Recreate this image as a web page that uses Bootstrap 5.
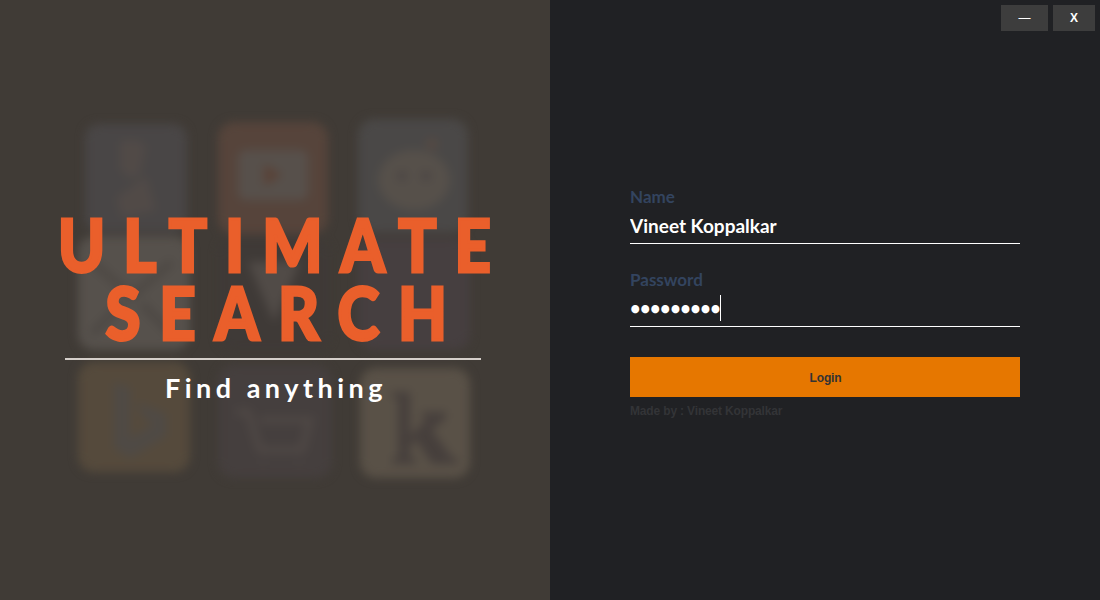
<!DOCTYPE html>
<html>
<head>
    <meta charset="UTF-8">
    <title>Ultimate Search</title>
    <link rel="stylesheet" href="https://cdn.jsdelivr.net/npm/bootstrap@5.3.0/dist/css/bootstrap.min.css">
    <style>
        body {
            width: 1100px;
            height: 600px;
            overflow: hidden;
            background: #202124;
        }

        .side-art {
            width: 550px;
            height: 600px;
            background: #403b36;
        }

        .art-icons {
            position: absolute;
            left: 0;
            top: 0;
            filter: blur(5px);
        }

        .brand {
            position: relative;
            padding-top: 210px;
        }

        .brand-line {
            font-family: Lato, "Liberation Sans", sans-serif;
            font-weight: 900;
            font-size: 72px;
            line-height: 68px;
            color: #ea5f2b;
            -webkit-text-stroke: 3px #ea5f2b;
            white-space: nowrap;
            transform: scaleX(0.88);
        }

        .brand-one { letter-spacing: 20.4px; margin-right: -17px; }
        .brand-two { letter-spacing: 21.5px; margin-right: -21.5px; }

        .brand-rule {
            width: 416px;
            height: 2px;
            margin: 12px 0 0 65px;
            background: #d5cfca;
        }

        .brand-tag {
            font-family: Lato, "Liberation Sans", sans-serif;
            font-weight: 700;
            font-size: 27px;
            line-height: 32px;
            letter-spacing: 4.5px;
            margin-top: 12px;
            padding-left: 2px;
            color: #fff;
        }

        .side-form {
            width: 550px;
            height: 600px;
        }

        .win-btn {
            height: 26px;
            border: 0;
            border-radius: 0;
            padding: 0;
            background: #3d3d3d;
            color: #fff;
            font-family: "Liberation Sans", sans-serif;
            font-weight: 700;
            font-size: 12px;
        }

        .win-bar {
            padding: 5px 5px 0 0;
            gap: 5px;
        }

        .win-min { width: 47px; font-weight: 400; }
        .win-close { width: 42px; }

        .login-form {
            width: 390px;
            margin: 156px 0 0 80px;
        }

        .field-label {
            display: block;
            margin: 0;
            font-family: Lato, "Liberation Sans", sans-serif;
            font-weight: 700;
            font-size: 17px;
            line-height: 20px;
            color: #33445f;
        }

        .field-input,
        .field-input:focus {
            height: 37px;
            padding: 0;
            border: 0;
            border-bottom: 1px solid #fff;
            border-radius: 0;
            box-shadow: none;
            background: transparent;
            color: #fff;
            font-family: Lato, "Liberation Sans", sans-serif;
            font-weight: 700;
            font-size: 19px;
        }

        .field-gap { margin-top: 26px; }

        .pass-input,
        .pass-input:focus {
            font-size: 18px;
            letter-spacing: -0.4px;
        }

        .pass-caret {
            position: absolute;
            left: 90px;
            top: 5px;
            width: 1px;
            height: 26px;
            background: #fff;
        }

        .login-btn,
        .login-btn:hover {
            height: 40px;
            margin-top: 30px;
            padding: 6px 0 4px 1px;
            border: 0;
            border-radius: 0;
            background: #e67700;
            color: #333;
            font-family: "Liberation Sans", sans-serif;
            font-weight: 700;
            font-size: 12px;
            letter-spacing: -0.1px;
        }

        .made-by {
            margin-top: 7px;
            font-family: "Liberation Sans", sans-serif;
            font-weight: 700;
            font-size: 12px;
            line-height: 14px;
            letter-spacing: -0.16px;
            color: #333437;
        }
    </style>
</head>
<body>
    <div class="d-flex">
        <div class="side-art position-relative">
            <svg class="art-icons" width="550" height="600" viewBox="0 0 550 600">
                <!-- google plus -->
                <rect x="85" y="124" width="102" height="108" rx="14" fill="#494646"/>
                <path d="M120 142 q16 -6 26 4 l-6 28 q-12 10 -20 -6 z M146 176 l10 34 -34 8 -6 -20 z" fill="#514a47"/>
                <!-- youtube -->
                <rect x="218" y="122" width="110" height="112" rx="16" fill="#56443b"/>
                <rect x="238" y="150" width="70" height="50" rx="8" fill="#57504b"/>
                <path d="M264 164 l18 11 -18 11 z" fill="#594237"/>
                <!-- reddit -->
                <rect x="358" y="119" width="110" height="114" rx="16" fill="#4a4847"/>
                <ellipse cx="414" cy="180" rx="36" ry="30" fill="#56504a"/>
                <circle cx="402" cy="176" r="5" fill="#4b4544"/>
                <circle cx="426" cy="176" r="5" fill="#4b4544"/>
                <circle cx="432" cy="144" r="6" fill="#564a43"/>
                <!-- mail -->
                <rect x="78" y="236" width="112" height="114" rx="16" fill="#56514c"/>
                <path d="M92 262 l40 34 40 -34 M92 334 l30 -30 M172 334 l-30 -30" stroke="#4d4844" stroke-width="8" fill="none"/>
                <!-- middle -->
                <rect x="218" y="238" width="112" height="112" rx="16" fill="#3f3a37"/>
                <path d="M248 262 l26 60 26 -60 z" fill="#514b47"/>
                <!-- right -->
                <rect x="358" y="238" width="112" height="112" rx="16" fill="#463f40"/>
                <!-- bing -->
                <rect x="78" y="362" width="112" height="110" rx="16" fill="#554a3c"/>
                <path d="M114 382 l16 6 v50 l24 -14 -10 -6 -8 -16 30 12 v22 l-36 22 -16 -10 z" fill="#4f4a45"/>
                <!-- cart -->
                <rect x="218" y="365" width="114" height="113" rx="16" fill="#453f3e"/>
                <path d="M236 412 h12 l12 38 h42 l8 -30 h-50 M262 464 h2 M298 464 h2" stroke="#4f4845" stroke-width="7" fill="none"/>
                <!-- kickass -->
                <rect x="360" y="368" width="110" height="110" rx="16" fill="#595147"/>
                <path d="M392 392 h18 v44 l18 -18 h-6 v-6 h24 v6 l-14 12 20 28 h6 v6 h-26 l-16 -24 -6 6 v12 h6 v6 h-24 v-6 h6 v-60 h-6 z" fill="#463f3c"/>
            </svg>
            <div class="brand text-center">
                <div class="brand-line brand-one">ULTIMATE</div>
                <div class="brand-line brand-two">SEARCH</div>
                <div class="brand-rule"></div>
                <div class="brand-tag">Find anything</div>
            </div>
        </div>
        <div class="side-form">
            <div class="d-flex justify-content-end win-bar">
                <button class="btn win-btn win-min" type="button">—</button>
                <button class="btn win-btn win-close" type="button">X</button>
            </div>
            <form class="login-form">
                <label class="field-label" for="nameInput">Name</label>
                <input class="form-control field-input" id="nameInput" type="text" value="Vineet Koppalkar">
                <label class="field-label field-gap" for="passInput">Password</label>
                <div class="position-relative">
                    <input class="form-control field-input pass-input" id="passInput" type="password" value="123456789">
                    <span class="pass-caret"></span>
                </div>
                <button class="btn login-btn w-100" type="button">Login</button>
                <div class="made-by">Made by : Vineet Koppalkar</div>
            </form>
        </div>
    </div>
    <script src="https://cdn.jsdelivr.net/npm/bootstrap@5.3.0/dist/js/bootstrap.bundle.min.js"></script>
</body>
</html>
